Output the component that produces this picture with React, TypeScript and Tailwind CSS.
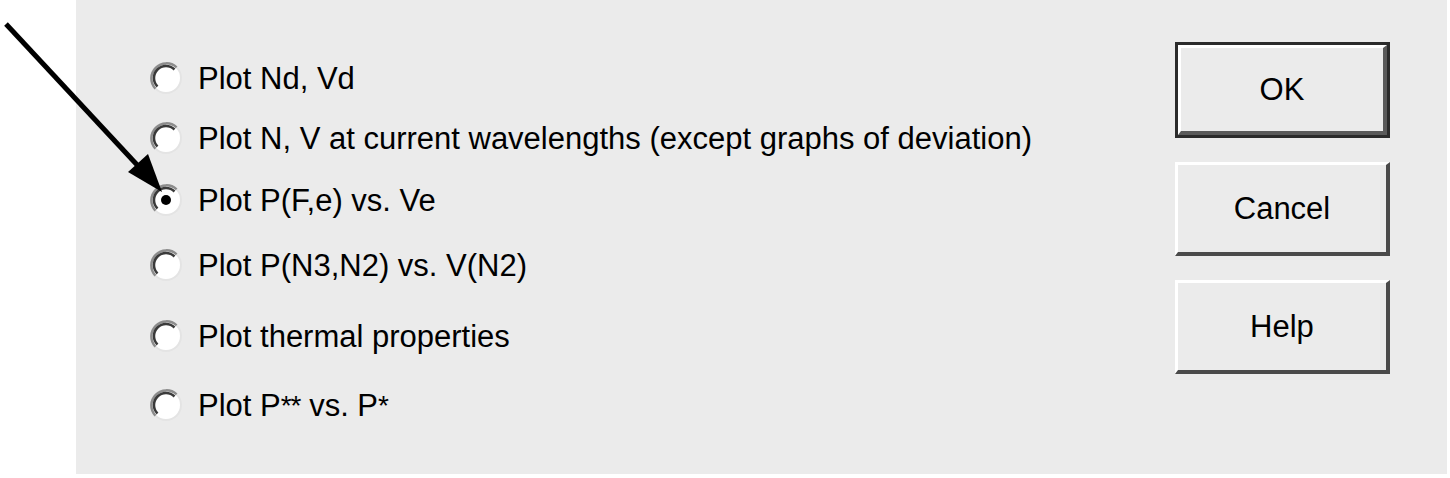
import React from "react";

const Radio = ({ checked }: { checked?: boolean }) => (
  <svg width="34" height="34" viewBox="0 0 34 34" className="shrink-0">
    <circle cx="17" cy="17" r="15" fill="#ffffff" stroke="#e4e4e4" strokeWidth="2" />
    <path d="M6.4 27.6 A15 15 0 0 1 27.6 6.4" fill="none" stroke="#8c8c8c" strokeWidth="2.5" />
    <path d="M8.5 25.5 A12 12 0 0 1 25.5 8.5" fill="none" stroke="#3a3a3a" strokeWidth="2.5" />
    {checked && <circle cx="17" cy="17" r="5" fill="#000" />}
  </svg>
);

const Sup = ({ children }: { children: React.ReactNode }) => (
  <span className="text-[28px] relative -top-[1px] tracking-[-1px]">{children}</span>
);

const rows: { label: React.ReactNode; checked?: boolean; mt: string }[] = [
  { label: "Plot Nd, Vd", mt: "mt-0" },
  { label: "Plot N, V at current wavelengths (except graphs of deviation)", mt: "mt-[26px]" },
  { label: "Plot P(F,e) vs. Ve", checked: true, mt: "mt-[28px]" },
  { label: "Plot P(N3,N2) vs. V(N2)", mt: "mt-[31px]" },
  { label: "Plot thermal properties", mt: "mt-[37px]" },
  {
    label: (
      <>
        Plot P<Sup>**</Sup> vs. P<Sup>*</Sup>
      </>
    ),
    mt: "mt-[35px]",
  },
];

const Btn = ({ children, isDefault }: { children: React.ReactNode; isDefault?: boolean }) =>
  isDefault ? (
    <div className="w-[215px] h-[96px] border-[3px] border-[#2b2b2b]">
      <div className="w-full h-full border-t-[3px] border-l-[3px] border-t-white border-l-white border-b-[4px] border-r-[4px] border-b-[#5a5a5a] border-r-[#5a5a5a] bg-[#ebebeb] flex items-center justify-center">
        {children}
      </div>
    </div>
  ) : (
    <div className="w-[215px] h-[94px] border-t-[3px] border-l-[3px] border-t-white border-l-white border-b-[4px] border-r-[4px] border-b-[#4a4a4a] border-r-[#4a4a4a] bg-[#ebebeb] flex items-center justify-center">
      {children}
    </div>
  );

export default function App() {
  return (
    <div
      className="relative w-[1450px] h-[478px] bg-white overflow-hidden text-black"
      style={{ fontFamily: '"Liberation Sans", Arial, sans-serif' }}
    >
      <div className="ml-[76px] w-[1371px] h-[474px] bg-[#ebebeb] flex">
        <div className="pl-[73px] pt-[61px] flex flex-col w-[1023px]">
          {rows.map((r, i) => (
            <div key={i} className={`flex items-center h-[34px] ${r.mt}`}>
              <Radio checked={r.checked} />
              <span className="ml-[15px] text-[31px] leading-none whitespace-nowrap">{r.label}</span>
            </div>
          ))}
        </div>
        <div className="pt-[42px] flex flex-col gap-[24px] ml-[76px]">
          <Btn isDefault>
            <span className="text-[31px] leading-none">OK</span>
          </Btn>
          <Btn>
            <span className="text-[31px] leading-none">Cancel</span>
          </Btn>
          <Btn>
            <span className="text-[31px] leading-none">Help</span>
          </Btn>
        </div>
      </div>
      <svg className="absolute left-0 top-0" width="200" height="220" viewBox="0 0 200 220">
        <line x1="6" y1="24" x2="140" y2="168" stroke="#000" strokeWidth="5" />
        <polygon points="162,192 128,172 148,154" fill="#000" />
      </svg>
    </div>
  );
}
